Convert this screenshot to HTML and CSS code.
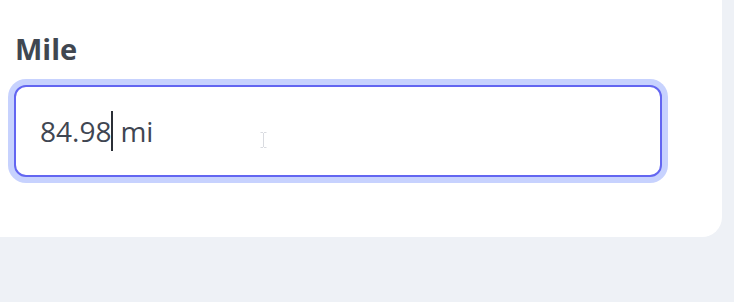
FILE: index.html
```html
<!DOCTYPE html>
<html>
<head>
<meta charset="utf-8">
<link rel="stylesheet" href="styles.css">
</head>
<body>
<div class="card">
  <div class="label">Mile</div>
  <div class="field">
    <span class="value">84.98</span><span class="caret"></span><span class="unit">&nbsp;mi</span>
    <svg class="ibeam" width="7" height="16" viewBox="0 0 7 16"><path d="M0.5 0.5h2.5M4 0.5h2.5M3.5 1v14M0.5 15.5h2.5M4 15.5h2.5" stroke="#d9dbe0" stroke-width="1" fill="none"/></svg>
  </div>
</div>
</body>
</html>
```
FILE: styles.css
```css
html, body {
  margin: 0;
  padding: 0;
}
body {
  background: #eef1f6;
  width: 734px;
  height: 302px;
  font-family: "Open Sans", "Noto Sans", sans-serif;
  overflow: hidden;
}
.card {
  width: 722px;
  height: 237px;
  box-sizing: border-box;
  background: #ffffff;
  border-radius: 0 0 20px 0;
  padding: 31px 0 0 14px;
}
.label {
  font-size: 29px;
  line-height: 36px;
  font-weight: 700;
  color: #404751;
  padding-left: 1px;
}
.field {
  position: relative;
  margin-top: 18px;
  width: 648px;
  height: 92px;
  box-sizing: border-box;
  border: 2px solid #6366f1;
  border-radius: 12px;
  box-shadow: 0 0 0 6px #c7d2fe;
  background: #fff;
  display: flex;
  align-items: center;
  padding: 0 24px;
  font-size: 28px;
  line-height: 40px;
  color: #3f4652;
}
.caret {
  display: inline-block;
  width: 2px;
  height: 40px;
  background: #2b2f36;
}
.unit {
  letter-spacing: -0.2px;
}
.ibeam {
  position: absolute;
  left: 244px;
  top: 45px;
}
```
